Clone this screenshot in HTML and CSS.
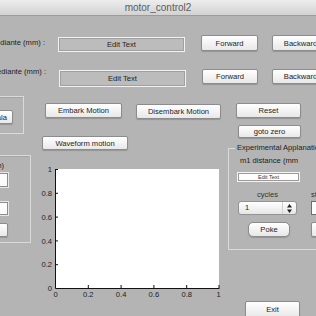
FILE: index.html
```html
<!DOCTYPE html>
<html lang="en">
<head>
  <meta charset="UTF-8">
  <title>motor_control2</title>
  <link rel="stylesheet" href="styles.css">
</head>
<body>
  <div class="window">
    <div class="titlebar">motor_control2</div>
    <div class="figure">
      <div class="row row-1">
        <div class="label"><span>Aplanación mediante (mm) :</span></div>
        <div class="edit edit-wide">Edit Text</div>
        <button class="btn btn-fwd">Forward</button>
        <button class="btn btn-back">Backward</button>
      </div>
      <div class="row row-2">
        <div class="label"><span>Distancia mediante (mm) :</span></div>
        <div class="edit edit-wide">Edit Text</div>
        <button class="btn btn-fwd">Forward</button>
        <button class="btn btn-back">Backward</button>
      </div>

      <div class="main">
        <!-- left column, mostly cut off by the window edge -->
        <div class="col-left">
          <div class="panel panel-scale">
            <button class="btn btn-scale">Escala</button>
          </div>
          <div class="panel panel-step">
            <div class="mini-label"><span>Paso (mm)</span></div>
            <div class="mini-edit mini-edit-1"></div>
            <div class="mini-edit mini-edit-2"></div>
            <button class="btn btn-mini">Mover</button>
          </div>
        </div>

        <div class="col-center">
          <div class="motion-row">
            <button class="btn btn-embark">Embark Motion</button>
            <button class="btn btn-disembark">Disembark Motion</button>
          </div>
          <button class="btn btn-wave">Waveform motion</button>
          <svg class="plot" width="193" height="145" viewBox="0 0 193 145">
            <rect x="23" y="9" width="164" height="119" fill="#fff"/>
            <path d="M23.5 9 V128.5 H187.5" stroke="#111" fill="none"/>
            <g stroke="#111">
              <path d="M23 9.5 H26 M23 33.3 H26 M23 57.1 H26 M23 80.9 H26 M23 104.7 H26"/>
              <path d="M56.3 128 V125 M89.1 128 V125 M121.9 128 V125 M154.7 128 V125 M187 128 V125"/>
            </g>
            <g class="tick-label" text-anchor="end">
              <text x="20" y="12">1</text>
              <text x="20" y="36">0.8</text>
              <text x="20" y="60">0.6</text>
              <text x="20" y="84">0.4</text>
              <text x="20" y="107">0.2</text>
              <text x="20" y="131">0</text>
            </g>
            <g class="tick-label" text-anchor="middle">
              <text x="23.5" y="137">0</text>
              <text x="56.3" y="137">0.2</text>
              <text x="89.1" y="137">0.4</text>
              <text x="121.9" y="137">0.6</text>
              <text x="154.7" y="137">0.8</text>
              <text x="186.5" y="137">1</text>
            </g>
          </svg>
        </div>

        <div class="col-right">
          <button class="btn btn-reset">Reset</button>
          <button class="btn btn-zero">goto zero</button>
          <fieldset class="exp-panel">
            <legend>Experimental Applanation</legend>
            <div class="exp-text">m1 distance (mm</div>
            <div class="edit-small">Edit Text</div>
            <div class="exp-cols">
              <div class="exp-col exp-col-cycles">
                <div class="exp-label">cycles</div>
                <div class="popup">
                  <span>1</span>
                  <span class="popup-arrows">
                    <svg width="5" height="9" viewBox="0 0 5 9"><path d="M2.5 0 L5 3.5 H0 Z M2.5 9 L5 5.5 H0 Z" fill="#222"/></svg>
                  </span>
                </div>
                <button class="btn btn-poke">Poke</button>
              </div>
              <div class="exp-col exp-col-step">
                <div class="exp-label step-label">step</div>
                <div class="step-box"></div>
                <button class="btn btn-step">Go</button>
              </div>
            </div>
          </fieldset>
          <button class="btn btn-exit">Exit</button>
        </div>
      </div>
    </div>
  </div>
</body>
</html>
```

FILE: styles.css
```css
body {
  margin: 0;
  font-family: "Liberation Sans", Arial, sans-serif;
  background: #b4b4b4;
}
.window {
  width: 316px;
  height: 316px;
  overflow: hidden;
  display: flex;
  flex-direction: column;
}
.titlebar {
  flex-shrink: 0;
  height: 16px;
  box-sizing: border-box;
  border-bottom: 1px solid #9c9c9c;
  background: linear-gradient(#ededed, #d2d2d2);
  text-align: center;
  font-size: 10px;
  line-height: 15px;
  color: #5c5c5c;
}
.figure {
  flex: 1;
  display: flex;
  flex-direction: column;
  background: #b4b4b4;
  font-size: 7.6px;
  color: #1c1c1c;
}

/* top parameter rows */
.row {
  display: flex;
  align-items: flex-start;
  height: 17px;
  flex-shrink: 0;
}
.row-1 {
  margin-top: 19px;
}
.row-2 {
  margin-top: 17px;
}
.label {
  display: flex;
  justify-content: flex-end;
  flex-shrink: 0;
  overflow: hidden;
  white-space: nowrap;
  line-height: 10px;
}
.row-1 .label {
  width: 45px;
  margin-top: 3px;
}
.row-2 .label {
  width: 46px;
  margin-top: -2px;
}
.edit-wide {
  flex-shrink: 0;
  width: 127px;
  box-sizing: border-box;
  margin-left: 13px;
  display: flex;
  align-items: center;
  justify-content: center;
  background: #bcbcbc;
  border: 1px solid #f2f2f2;
  box-shadow: inset 0 0 0 1px #a0a0a0;
}
.row-1 .edit-wide {
  margin-top: 2px;
  height: 15px;
}
.row-2 .edit-wide {
  margin-top: 1px;
  height: 17px;
}

.btn {
  flex-shrink: 0;
  box-sizing: border-box;
  padding: 0;
  border: 1px solid #8c8c8c;
  border-radius: 2px;
  background: linear-gradient(#ffffff, #e8e8e8);
  box-shadow: 0 1px 1px rgba(0, 0, 0, 0.18);
  font-family: "Liberation Sans", Arial, sans-serif;
  font-size: 7.6px;
  color: #1c1c1c;
  white-space: nowrap;
  overflow: hidden;
  align-self: flex-start;
}
.btn-fwd {
  margin-left: 16px;
  width: 57px;
  height: 16px;
}
.row-2 .btn-fwd {
  width: 56px;
  height: 15px;
}
.btn-back {
  margin-left: 14px;
  width: 57px;
  height: 16px;
}
.row-2 .btn-back {
  height: 15px;
}

/* main area */
.main {
  flex: 1;
  display: flex;
  min-height: 0;
}
.col-left {
  width: 32px;
  flex-shrink: 0;
  display: flex;
  flex-direction: column;
}
.col-center {
  width: 193px;
  flex-shrink: 0;
  display: flex;
  flex-direction: column;
}
.col-right {
  width: 91px;
  flex-shrink: 0;
  display: flex;
  flex-direction: column;
}

.panel {
  flex-shrink: 0;
  box-sizing: border-box;
  margin-left: -2px;
  border: 1px solid #dadada;
  box-shadow: inset 1px 1px 0 #a4a4a4;
  display: flex;
  flex-direction: column;
}
.panel-scale {
  margin-top: 10px;
  width: 26px;
  height: 38px;
}
.btn-scale {
  margin: 13px 0 0 -21px;
  width: 35px;
  height: 14px;
}
.panel-step {
  margin-top: 21px;
  width: 33px;
  height: 88px;
}
.mini-label {
  display: flex;
  justify-content: flex-end;
  overflow: hidden;
  white-space: nowrap;
  width: 5px;
  margin-top: 6px;
  line-height: 8px;
}
.mini-edit {
  box-sizing: border-box;
  margin-left: -10px;
  width: 19px;
  background: #fbfbfb;
  border: 1px solid #8c8c8c;
  box-shadow: 0 0 0 1px #e6e6e6;
}
.mini-edit-1 {
  margin-top: 3px;
  height: 14px;
}
.mini-edit-2 {
  margin-top: 15px;
  height: 13px;
}
.btn-mini {
  margin: 8px 0 0 -40px;
  width: 49px;
  height: 14px;
}

.motion-row {
  display: flex;
  align-items: flex-start;
  margin-top: 16px;
  height: 17px;
  flex-shrink: 0;
}
.btn-embark {
  margin: 1px 0 0 13px;
  width: 77px;
  height: 15px;
}
.btn-disembark {
  margin: 2px 0 0 14px;
  width: 85px;
  height: 15px;
}
.btn-wave {
  margin: 17px 0 0 10px;
  width: 86px;
  height: 14px;
}
.plot {
  display: block;
  flex-shrink: 0;
  margin-top: 10px;
}
.tick-label {
  font-family: "Liberation Sans", Arial, sans-serif;
  font-size: 7.6px;
  fill: #222;
}

.btn-reset {
  margin: 17px 0 0 11px;
  width: 65px;
  height: 15px;
}
.btn-zero {
  margin: 7px 0 0 13px;
  width: 63px;
  height: 13px;
}
.exp-panel {
  flex-shrink: 0;
  box-sizing: border-box;
  margin: 5px 0 0 3px;
  padding: 0;
  min-width: 0;
  width: 100px;
  height: 107px;
  border: 1px solid #dadada;
}
.exp-panel legend {
  margin-left: 6px;
  padding: 0 2px;
  line-height: 10px;
  white-space: nowrap;
}
.exp-text {
  margin: 3px 0 0 8px;
  width: 64px;
  line-height: 10px;
  text-align: center;
  white-space: nowrap;
}
.edit-small {
  box-sizing: border-box;
  margin: 6px 0 0 8px;
  width: 63px;
  height: 10px;
  background: #fdfdfd;
  border: 1px solid #f4f4f4;
  box-shadow: inset 0 0 0 1px #9a9a9a;
  font-size: 5.5px;
  line-height: 8px;
  text-align: center;
  color: #333;
}
.exp-cols {
  display: flex;
  margin-top: 8px;
}
.exp-col {
  display: flex;
  flex-direction: column;
  flex-shrink: 0;
}
.exp-col-cycles {
  margin-left: 9px;
  width: 59px;
}
.exp-col-step {
  margin-left: 14px;
  width: 20px;
}
.exp-label {
  line-height: 10px;
  text-align: center;
  color: #333;
}
.step-label {
  text-align: left;
}
.popup {
  box-sizing: border-box;
  margin-top: 1px;
  height: 14px;
  display: flex;
  justify-content: space-between;
  align-items: stretch;
  padding-left: 6px;
  border: 1px solid #939393;
  border-radius: 3px;
  background: linear-gradient(#ffffff, #e6e6e6);
  line-height: 12px;
}
.popup-arrows {
  width: 13px;
  display: flex;
  align-items: center;
  justify-content: center;
  border-left: 1px solid #cfcfcf;
}
.btn-poke {
  margin: 7px 0 0 10px;
  width: 42px;
  height: 15px;
  border-radius: 5px;
}
.step-box {
  box-sizing: border-box;
  margin-top: 1px;
  height: 14px;
  background: #fdfdfd;
  border: 1px solid #6e6e6e;
}
.btn-step {
  margin-top: 7px;
  width: 20px;
  height: 15px;
}
.btn-exit {
  margin: 51px 0 0 20px;
  width: 55px;
  height: 17px;
}
```
